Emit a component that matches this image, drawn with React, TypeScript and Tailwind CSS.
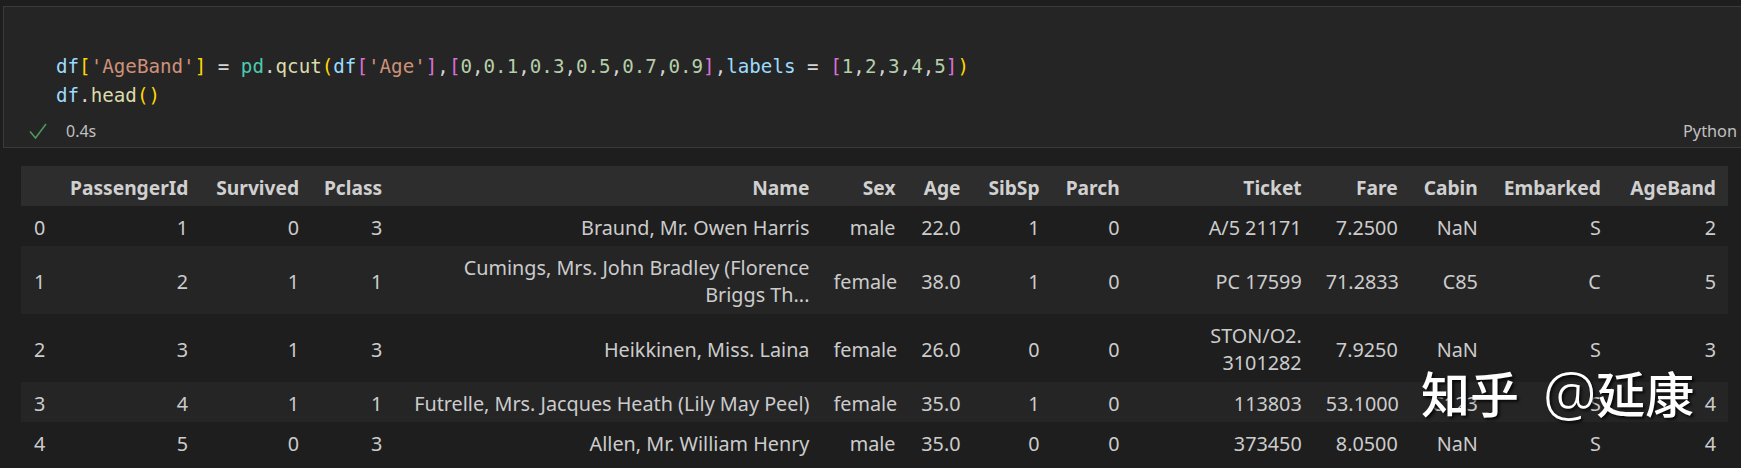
const C = {
  v: "text-[#9cdcfe]", y: "text-[#ffd700]", s: "text-[#ce9178]", p: "text-[#d4d4d4]",
  t: "text-[#4ec9b0]", f: "text-[#dcdcaa]", m: "text-[#da70d6]", n: "text-[#b5cea8]",
};

const line1: [string, string][] = [
  ["df", C.v], ["[", C.y], ["'AgeBand'", C.s], ["]", C.y], [" = ", C.p], ["pd", C.t], [".", C.p], ["qcut", C.f], ["(", C.y],
  ["df", C.v], ["[", C.m], ["'Age'", C.s], ["]", C.m], [",", C.p], ["[", C.m],
  ["0", C.n], [",", C.p], ["0.1", C.n], [",", C.p], ["0.3", C.n], [",", C.p], ["0.5", C.n], [",", C.p], ["0.7", C.n], [",", C.p], ["0.9", C.n],
  ["]", C.m], [",", C.p], ["labels", C.v], [" = ", C.p], ["[", C.m],
  ["1", C.n], [",", C.p], ["2", C.n], [",", C.p], ["3", C.n], [",", C.p], ["4", C.n], [",", C.p], ["5", C.n],
  ["]", C.m], [")", C.y],
];
const line2: [string, string][] = [["df", C.v], [".", C.p], ["head", C.f], ["()", C.y]];

const headers = ["", "PassengerId", "Survived", "Pclass", "Name", "Sex", "Age", "SibSp", "Parch", "Ticket", "Fare", "Cabin", "Embarked", "AgeBand"];
const widths = [37, 142, 111, 83, 427, 86, 65, 79, 80, 182, 96, 80, 123, 115];
const rows = [
  ["0", "1", "0", "3", "Braund, Mr. Owen Harris", "male", "22.0", "1", "0", "A/5 21171", "7.2500", "NaN", "S", "2"],
  ["1", "2", "1", "1", "Cumings, Mrs. John Bradley (Florence Briggs Th...", "female", "38.0", "1", "0", "PC 17599", "71.2833", "C85", "C", "5"],
  ["2", "3", "1", "3", "Heikkinen, Miss. Laina", "female", "26.0", "0", "0", "STON/O2. 3101282", "7.9250", "NaN", "S", "3"],
  ["3", "4", "1", "1", "Futrelle, Mrs. Jacques Heath (Lily May Peel)", "female", "35.0", "1", "0", "113803", "53.1000", "C123", "S", "4"],
  ["4", "5", "0", "3", "Allen, Mr. William Henry", "male", "35.0", "0", "0", "373450", "8.0500", "NaN", "S", "4"],
];

function Code({ parts }: { parts: [string, string][] }) {
  return (
    <div className="h-[29px] leading-[29px] whitespace-pre">
      {parts.map(([t, c], i) => (
        <span key={i} className={c}>{t}</span>
      ))}
    </div>
  );
}

export default function App() {
  return (
    <div className="relative w-[1741px] h-[468px] overflow-hidden bg-[#1e1e1e] pt-[6px] font-['Noto_Sans',sans-serif] text-[#cccccc]">
      <div className="ml-[3px] h-[142px] border border-[#3a3a3a] border-r-0 bg-[#252526] flex flex-col">
        <div className="pt-[45px] pl-[52px] h-[112px] font-['DejaVu_Sans_Mono',monospace] text-[19.2px]">
          <Code parts={line1} />
          <Code parts={line2} />
        </div>
        <div className="flex items-center h-[24px] text-[16px] text-[#c0c0c0]">
          <svg className="ml-[24px] w-[20px] h-[18px]" viewBox="0 0 20 18" fill="none" stroke="#4f9a5c" strokeWidth="1.5">
            <path d="M2 9.5 L7.5 16 L18 2" />
          </svg>
          <span className="ml-[18px]">0.4s</span>
          <span className="ml-auto mr-[4px] text-[16.3px]">Python</span>
        </div>
      </div>
      <table className="ml-[21px] mt-[18px] table-fixed border-collapse w-[1707px] text-[19.8px] leading-[27px]">
        <colgroup>
          {widths.map((w, i) => (
            <col key={i} style={{ width: w }} />
          ))}
        </colgroup>
        <thead>
          <tr className="bg-[#2d2d2d]">
            {headers.map((h, i) => (
              <th key={i} className="h-[40px] px-[12px] pt-[3px] text-right align-middle text-[19.2px] font-bold text-[#d0d0d0] whitespace-nowrap">{h}</th>
            ))}
          </tr>
        </thead>
        <tbody>
          {rows.map((r, ri) => (
            <tr key={ri} className={ri % 2 === 1 ? "bg-[#252526]" : ""}>
              {r.map((c, i) => (
                <td
                  key={i}
                  className={`${ri === 1 || ri === 2 ? "h-[68px]" : "h-[40px]"} pt-[2px] align-middle ${i === 0 ? "pl-[13px] text-left" : "px-[12px] text-right"}`}
                >
                  {c}
                </td>
              ))}
            </tr>
          ))}
        </tbody>
      </table>
      <div className="absolute left-[1421px] top-[361px] flex items-center h-[62px] text-[49px] leading-[62px] font-medium text-white whitespace-pre font-['Noto_Sans_CJK_SC','Noto_Sans',sans-serif] [text-shadow:2px_2px_3px_rgba(0,0,0,0.8)]">
        <span>知乎</span>
        <span className="ml-[24px] text-[60px] font-['Noto_Sans',sans-serif] font-light">@</span>
        <span>延康</span>
      </div>
    </div>
  );
}
